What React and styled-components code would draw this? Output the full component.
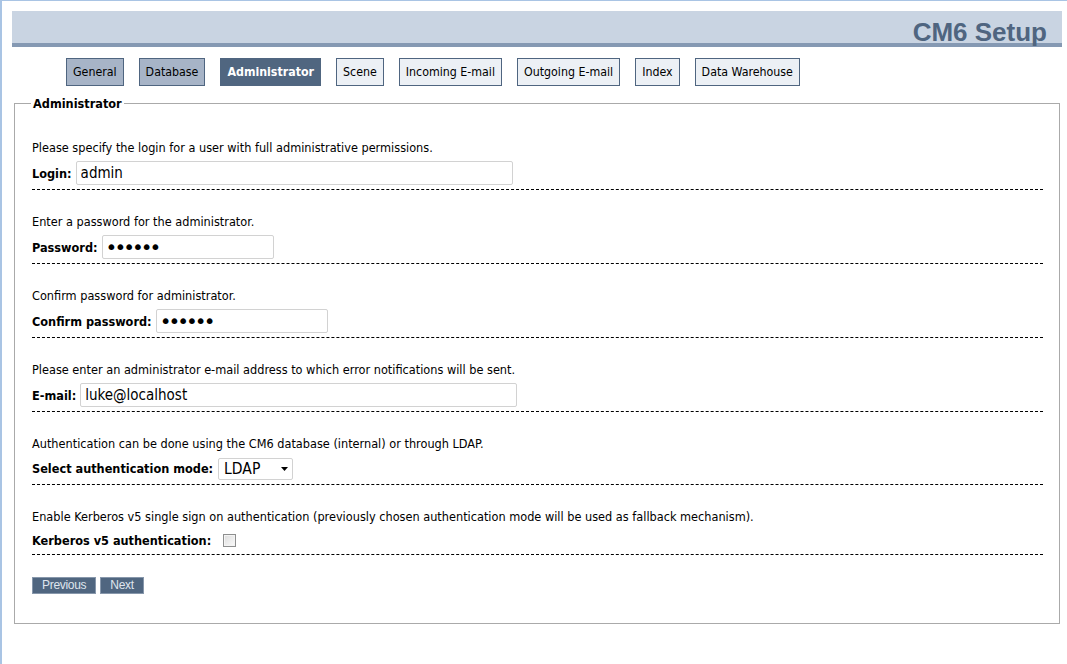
import React from 'react';
import styled, { createGlobalStyle } from 'styled-components';

const GlobalStyle = createGlobalStyle`
    html, body {
        margin: 0;
        padding: 0;
        background: #fff;
    }
    body {
        border-top: 1px solid #a9c4e4;
        border-left: 2px solid #a9c4e4;
        min-height: 663px;
        font-family: "DejaVu Sans Condensed", "DejaVu Sans", sans-serif;
        font-size: 12.6px;
        color: #000;
    }
`;

const Page = styled.div`
    padding: 10px 5px 0 10px;
`;

const Header = styled.div`
    height: 32px;
    background: #c9d4e2;
    border-bottom: 4px solid #8599b3;
    display: flex;
    justify-content: flex-end;
    align-items: flex-end;
    padding-right: 15px;
`;

const Title = styled.h1`
    margin: 0 0 -4px;
    font-family: "Liberation Sans", Arial, sans-serif;
    font-weight: bold;
    font-size: 26px;
    line-height: 30px;
    color: #4f6580;
`;

const Tabs = styled.div`
    display: flex;
    gap: 15px;
    margin: 11px 0 0 54px;
`;

const Tab = styled.div`
    height: 26px;
    padding: 0 6px;
    display: flex;
    align-items: center;
    border: 1px solid #4f6580;
    font-size: 12.3px;
    background: ${p => p.active ? '#506680' : p.done ? '#a7b4c7' : '#ecf0f5'};
    color: ${p => p.active ? '#fff' : '#000'};
    font-weight: ${p => p.active ? 'bold' : 'normal'};
    ${p => p.active && 'border-color: #506680;'}
`;

const Fieldset = styled.fieldset`
    margin: 10px 2px 0 2px;
    border: 1px solid #aaa;
    padding: 29px 16px 29px 17px;
    min-width: 0;
`;

const Legend = styled.legend`
    font-weight: bold;
    font-size: 12.6px;
    padding: 0 2px;
    margin-left: -1px;
`;

const Row = styled.div`
    border-bottom: 1px dashed #000;
    padding-bottom: 4px;
    margin-bottom: 24px;
`;

const Description = styled.p`
    margin: 0 0 6px;
    line-height: 15px;
`;

const Field = styled.div`
    display: flex;
    align-items: center;
    gap: 4px;
    min-height: ${p => p.h || 24}px;
`;

const Label = styled.label`
    font-weight: bold;
`;

const TextInput = styled.input`
    box-sizing: border-box;
    width: ${p => p.w}px;
    height: 24px;
    border: 1px solid #d2d2d2;
    border-radius: 2px;
    padding: 0 4px;
    font-family: "DejaVu Sans Condensed", "DejaVu Sans", sans-serif;
    font-size: 15px;
    color: #000;
    outline: none;
    &[type="password"] {
        font-family: "DejaVu Sans", sans-serif;
        font-size: 20px;
        letter-spacing: -3px;
        padding-left: 3px;
    }
`;

const SelectWrap = styled.div`
    position: relative;
    width: 75px;
    height: 22px;
    margin-left: 1px;
`;

const Select = styled.select`
    appearance: none;
    box-sizing: border-box;
    width: 100%;
    height: 100%;
    border: 1px solid #d2d2d2;
    border-radius: 2px;
    background: #fff;
    padding: 0 5px;
    font-family: "DejaVu Sans Condensed", "DejaVu Sans", sans-serif;
    font-size: 15.5px;
    color: #000;
`;

const Arrow = styled.svg`
    position: absolute;
    right: 5px;
    top: 9px;
    pointer-events: none;
`;

const Checkbox = styled.input`
    appearance: none;
    margin: 0 0 0 8px;
    width: 13px;
    height: 13px;
    border: 1px solid #8e8f8f;
    background: linear-gradient(135deg, #dcdcdc, #fbfbfb);
    box-shadow: inset 0 0 0 1px #f4f4f4;
`;

const Buttons = styled.div`
    display: flex;
    gap: 4px;
    margin-top: -2px;
`;

const Button = styled.button`
    height: 17px;
    padding: 0 9px;
    border: 1px solid #8797ab;
    background: #506680;
    color: #dfe5ee;
    font-family: "Liberation Sans", Arial, sans-serif;
    font-size: 12px;
    line-height: 15px;
    letter-spacing: -0.3px;
`;

const tabs = [
    { name: 'General', done: true },
    { name: 'Database', done: true },
    { name: 'Administrator', active: true },
    { name: 'Scene' },
    { name: 'Incoming E-mail' },
    { name: 'Outgoing E-mail' },
    { name: 'Index' },
    { name: 'Data Warehouse' },
];

export default function App() {
    return (
        <>
            <GlobalStyle />
            <Page>
                <Header>
                    <Title>CM6 Setup</Title>
                </Header>
                <Tabs>
                    {tabs.map(t => (
                        <Tab key={t.name} active={t.active} done={t.done}>{t.name}</Tab>
                    ))}
                </Tabs>
                <Fieldset>
                    <Legend>Administrator</Legend>

                    <Row>
                        <Description>Please specify the login for a user with full administrative permissions.</Description>
                        <Field>
                            <Label>Login:</Label>
                            <TextInput w={437} defaultValue="admin" />
                        </Field>
                    </Row>

                    <Row>
                        <Description>Enter a password for the administrator.</Description>
                        <Field>
                            <Label>Password:</Label>
                            <TextInput w={172} type="password" defaultValue="secret" />
                        </Field>
                    </Row>

                    <Row>
                        <Description>Confirm password for administrator.</Description>
                        <Field>
                            <Label>Confirm password:</Label>
                            <TextInput w={172} type="password" defaultValue="secret" />
                        </Field>
                    </Row>

                    <Row>
                        <Description>Please enter an administrator e-mail address to which error notifications will be sent.</Description>
                        <Field>
                            <Label>E-mail:</Label>
                            <TextInput w={437} defaultValue="luke@localhost" />
                        </Field>
                    </Row>

                    <Row>
                        <Description>Authentication can be done using the CM6 database (internal) or through LDAP.</Description>
                        <Field h={23}>
                            <Label>Select authentication mode:</Label>
                            <SelectWrap>
                                <Select defaultValue="ldap">
                                    <option value="internal">Internal</option>
                                    <option value="ldap">LDAP</option>
                                </Select>
                                <Arrow width="7" height="4" viewBox="0 0 7 4">
                                    <path d="M0 0h7L3.5 4z" fill="#000" />
                                </Arrow>
                            </SelectWrap>
                        </Field>
                    </Row>

                    <Row>
                        <Description>Enable Kerberos v5 single sign on authentication (previously chosen authentication mode will be used as fallback mechanism).</Description>
                        <Field h={20}>
                            <Label>Kerberos v5 authentication:</Label>
                            <Checkbox type="checkbox" />
                        </Field>
                    </Row>

                    <Buttons>
                        <Button>Previous</Button>
                        <Button>Next</Button>
                    </Buttons>
                </Fieldset>
            </Page>
        </>
    );
}
